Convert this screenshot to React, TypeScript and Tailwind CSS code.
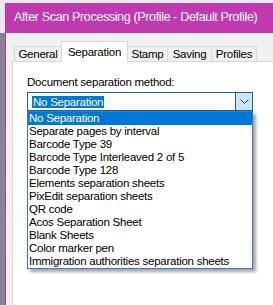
import React from 'react';

const items = [
  'No Separation',
  'Separate pages by interval',
  'Barcode Type 39',
  'Barcode Type Interleaved 2 of 5',
  'Barcode Type 128',
  'Elements separation sheets',
  'PixEdit separation sheets',
  'QR code',
  'Acos Separation Sheet',
  'Blank Sheets',
  'Color marker pen',
  'Immigration authorities separation sheets',
];

function Tab({ label, width, selected = false }: { label: string; width: string; selected?: boolean }) {
  if (selected) {
    return (
      <div
        className={`${width} relative z-10 -mb-px -ml-px flex h-[21px] shrink-0 items-start justify-center border border-b-0 border-[#d9d9d9] bg-white pt-[3px]`}
      >
        {label}
      </div>
    );
  }
  return (
    <div
      className={`${width} -ml-px flex h-[15px] shrink-0 items-center justify-center border border-b-0 border-[#d9d9d9] bg-[#f0f0f0]`}
    >
      {label}
    </div>
  );
}

export default function App() {
  return (
    <div className="flex h-[305px] w-[273px] flex-col overflow-hidden bg-[#ebe7ec] font-['Liberation_Sans',Arial,sans-serif] text-[11.5px] tracking-[-0.25px] text-black">
      <div className="h-[3px] shrink-0 bg-[#ece9ee]" />
      <div className="flex min-h-0 flex-1">
        {/* desktop behind the window */}
        <div className="flex w-[5px] shrink-0 flex-col">
          <div className="h-[30px] bg-[#efe7ee]" />
          <div className="flex-1 bg-[#8b8098]" />
        </div>

        <div className="flex min-w-0 flex-1 flex-col border-l border-[#c039b1]">
          {/* Title bar */}
          <div className="flex h-[30px] shrink-0 items-center overflow-hidden bg-[#c039b1] pl-[8px] pb-[1px] text-[12.5px] tracking-[-0.35px] text-white whitespace-nowrap">
            After Scan Processing (Profile - Default Profile)
          </div>

          {/* Body */}
          <div className="flex flex-1 flex-col bg-[#f0f0f0] pl-[6px] pt-[8px]">
            <div className="flex items-end pl-[3px] leading-[14px]">
              <Tab label="General" width="w-[48px]" />
              <Tab label="Separation" width="w-[67px]" selected />
              <Tab label="Stamp" width="w-[41px]" />
              <Tab label="Saving" width="w-[45px]" />
              <Tab label="Profiles" width="w-[46px]" />
            </div>

            <div className="relative flex-1 border-l border-t border-[#d9d9d9] bg-white pl-[14px] pt-[13px]">
              <div className="leading-[14px] whitespace-nowrap">Document separation method:</div>

              <div className="mt-[3px] flex h-[19px] w-[226px] border border-[#1f5f9f] bg-white">
                <div className="flex flex-1 items-center pl-[4px]">
                  <span className="bg-[#0078d7] px-[1px] leading-[12px] text-white">No Separation</span>
                </div>
                <div className="flex w-[17px] items-center justify-center border-l border-[#1f5f9f] bg-[#cce4f7]">
                  <svg width="9" height="6" viewBox="0 0 9 6" fill="none">
                    <path d="M0.5 0.5L4.5 4.5L8.5 0.5" stroke="#333" strokeWidth="1" />
                  </svg>
                </div>
              </div>

              {/* Open dropdown list */}
              <div className="absolute left-[14px] top-[49px] z-20 w-[226px] border border-[#3d7ab8] bg-white shadow-[3px_3px_3px_rgba(0,0,0,0.35)]">
                {items.map((item, i) => (
                  <div
                    key={item}
                    className={`h-[13px] pl-[1px] leading-[13px] whitespace-nowrap ${i === 0 ? 'bg-[#0078d7] text-white' : ''}`}
                  >
                    {item}
                  </div>
                ))}
              </div>
            </div>
          </div>
        </div>
      </div>
    </div>
  );
}
